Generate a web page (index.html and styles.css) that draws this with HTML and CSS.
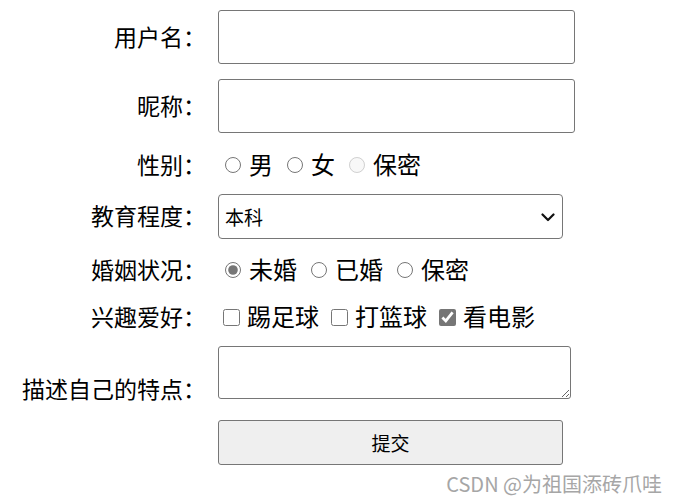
FILE: index.html
```html
<!DOCTYPE html>
<html lang="zh-CN">
<head>
<meta charset="utf-8">
<title>表单</title>
<link rel="stylesheet" href="styles.css">
</head>
<body>
<form class="form">
  <div class="row row-user">
    <label class="lbl">用户名：</label>
    <input class="text" type="text">
  </div>
  <div class="row row-nick">
    <label class="lbl">昵称：</label>
    <input class="text" type="text">
  </div>
  <div class="row row-sex">
    <span class="lbl">性别：</span>
    <div class="opts">
      <label class="opt"><input class="radio" type="radio" name="sex">男</label>
      <label class="opt"><input class="radio" type="radio" name="sex">女</label>
      <label class="opt"><input class="radio" type="radio" name="sex" disabled>保密</label>
    </div>
  </div>
  <div class="row row-edu">
    <label class="lbl">教育程度：</label>
    <div class="sel-wrap">
      <select class="sel">
        <option>本科</option>
        <option>硕士</option>
        <option>博士</option>
      </select>
      <svg class="chev" width="14" height="9" viewBox="0 0 14 9"><path d="M1.5 1.5 L7 7 L12.5 1.5" fill="none" stroke="#111" stroke-width="2.2" stroke-linecap="round" stroke-linejoin="round"/></svg>
    </div>
  </div>
  <div class="row row-mar">
    <span class="lbl">婚姻状况：</span>
    <div class="opts">
      <label class="opt"><input class="radio" type="radio" name="mar" checked>未婚</label>
      <label class="opt"><input class="radio" type="radio" name="mar">已婚</label>
      <label class="opt"><input class="radio" type="radio" name="mar">保密</label>
    </div>
  </div>
  <div class="row row-hob">
    <span class="lbl">兴趣爱好：</span>
    <div class="opts">
      <label class="opt"><input class="check" type="checkbox">踢足球</label>
      <label class="opt"><input class="check" type="checkbox">打篮球</label>
      <label class="opt"><input class="check" type="checkbox" checked>看电影</label>
    </div>
  </div>
  <div class="row row-desc">
    <label class="lbl lbl-bottom">描述自己的特点：</label>
    <textarea class="area"></textarea>
  </div>
  <div class="row row-sub">
    <span class="lbl"></span>
    <button class="btn" type="button">提交</button>
  </div>
</form>
<div class="mark">CSDN @为祖国添砖爪哇</div>
</body>
</html>
```

FILE: styles.css
```css
html, body {
  margin: 0;
  padding: 0;
  background: #fff;
}
body {
  font-family: "Noto Sans CJK SC", "Noto Sans", sans-serif;
  color: #000;
  width: 677px;
  height: 503px;
  position: relative;
  overflow: hidden;
}
.form {
  display: flex;
  flex-direction: column;
  padding-top: 10px;
}
.row {
  display: flex;
  align-items: center;
  column-gap: 12px;
}
.lbl {
  width: 206px;
  flex: none;
  text-align: right;
  font-size: 23px;
  line-height: 30px;
  margin-top: -3px;
}
.row-user { height: 54px; }
.row-nick { height: 54px; margin-top: 15px; }
.row-sex  { height: 34px; margin-top: 15px; }
.row-edu  { height: 45px; margin-top: 12px; }
.row-mar  { height: 34px; margin-top: 14px; }
.row-hob  { height: 34px; margin-top: 13px; }
.row-desc { height: 53px; margin-top: 12px; align-items: flex-end; }
.row-sub  { height: 45px; margin-top: 21px; }

.lbl-bottom { line-height: 26px; margin-bottom: -2px; }

.text {
  box-sizing: border-box;
  width: 357px;
  height: 54px;
  margin: 0;
  border: 1px solid #767676;
  border-radius: 3px;
  background: #fff;
  font-size: 19px;
  padding: 0 6px;
}
.opts {
  display: flex;
  align-items: center;
  column-gap: 7px;
  margin-top: -3px;
}
.opt {
  display: flex;
  align-items: center;
  font-size: 24px;
  line-height: 30px;
}
.radio {
  width: 16px;
  height: 16px;
  margin: 3px 8px 0 7px;
  accent-color: #767676;
}
.check {
  width: 17px;
  height: 17px;
  margin: 3px 7px 0 5px;
  accent-color: #767676;
}
.sel-wrap {
  position: relative;
  width: 345px;
  height: 45px;
}
.sel {
  box-sizing: border-box;
  appearance: none;
  -webkit-appearance: none;
  width: 345px;
  height: 45px;
  margin: 0;
  font-family: "Noto Sans CJK SC", sans-serif;
  font-size: 19px;
  padding-left: 6px;
  border: 1px solid #767676;
  border-radius: 4px;
  background-color: #fff;
  color: #000;
}
.chev {
  position: absolute;
  right: 8px;
  top: 19px;
  pointer-events: none;
}
.area {
  box-sizing: border-box;
  width: 353px;
  height: 53px;
  margin: 0;
  border: 1px solid #767676;
  border-radius: 3px;
  background: #fff;
  font-size: 16px;
}
.btn {
  box-sizing: border-box;
  width: 345px;
  height: 45px;
  margin: 0;
  border: 1px solid #767676;
  border-radius: 3px;
  background: #efefef;
  font-family: "Noto Sans CJK SC", sans-serif;
  font-size: 19px;
  color: #000;
}
.mark {
  position: absolute;
  right: 15px;
  bottom: 6px;
  font-size: 20px;
  line-height: 26px;
  color: #a6a6a6;
  font-family: "Noto Sans CJK SC", "Noto Sans", sans-serif;
  white-space: nowrap;
}
```
